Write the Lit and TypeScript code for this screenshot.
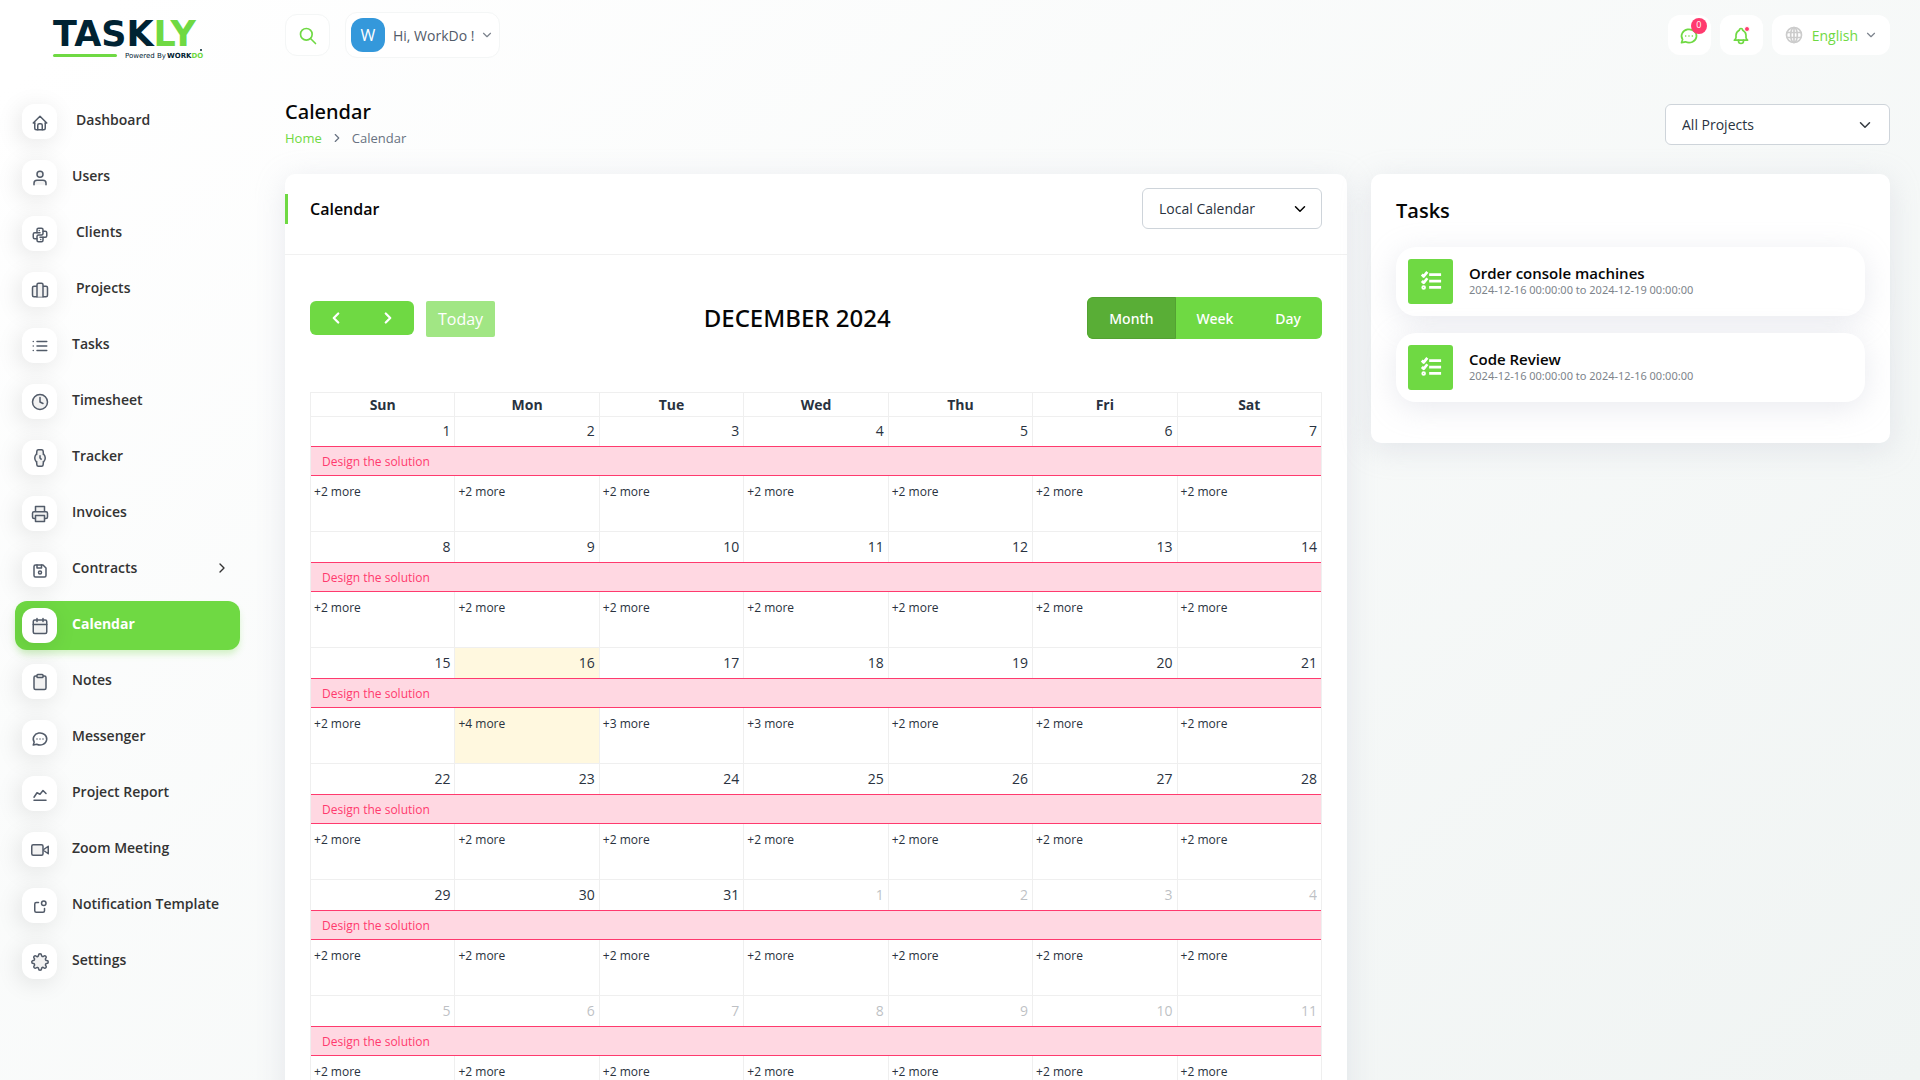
import { LitElement, html, css, svg, nothing } from "lit";
import { customElement } from "lit/decorators.js";
import { classMap } from "lit/directives/class-map.js";

const icons = {
  home: svg`<path d="M5 12H3l9-9 9 9h-2"/><path d="M5 12v7a2 2 0 0 0 2 2h10a2 2 0 0 0 2-2v-7"/><path d="M9 21v-6a2 2 0 0 1 2-2h2a2 2 0 0 1 2 2v6"/>`,
  user: svg`<path d="M20 21v-2a4 4 0 0 0-4-4H8a4 4 0 0 0-4 4v2"/><circle cx="12" cy="7" r="4"/>`,
  python: svg`<path d="M12 9H5a2 2 0 0 0-2 2v4a2 2 0 0 0 2 2h3"/><path d="M12 15h7a2 2 0 0 0 2-2V9a2 2 0 0 0-2-2h-3"/><path d="M8 9V5a2 2 0 0 1 2-2h4a2 2 0 0 1 2 2v5a2 2 0 0 1-2 2h-4a2 2 0 0 0-2 2v5a2 2 0 0 0 2 2h4a2 2 0 0 0 2-2v-4"/><path d="M11 6v.01M13 18v.01"/>`,
  briefcase: svg`<rect x="2" y="7" width="20" height="14" rx="2"/><path d="M16 21V5a2 2 0 0 0-2-2h-4a2 2 0 0 0-2 2v16"/>`,
  list: svg`<path d="M8 6h13M8 12h13M8 18h13M3 6h.01M3 12h.01M3 18h.01"/>`,
  clock: svg`<circle cx="12" cy="12" r="10"/><path d="M12 6v6l4 2"/>`,
  watch: svg`<circle cx="12" cy="12" r="7"/><path d="M12 9v3l1.5 1.5"/><path d="M16.51 17.35l-.35 3.83a2 2 0 0 1-2 1.82H9.83a2 2 0 0 1-2-1.82l-.35-3.83m.01-10.7l.35-3.83A2 2 0 0 1 9.83 1h4.35a2 2 0 0 1 2 1.82l.35 3.83"/>`,
  printer: svg`<path d="M6 9V2h12v7"/><path d="M6 18H4a2 2 0 0 1-2-2v-5a2 2 0 0 1 2-2h16a2 2 0 0 1 2 2v5a2 2 0 0 1-2 2h-2"/><rect x="6" y="14" width="12" height="8"/>`,
  floppy: svg`<path d="M6 4h10l4 4v10a2 2 0 0 1-2 2H6a2 2 0 0 1-2-2V6a2 2 0 0 1 2-2"/><circle cx="12" cy="14" r="2"/><path d="M14 4v4H8V4"/>`,
  calendar: svg`<rect x="3" y="4" width="18" height="18" rx="2"/><path d="M16 2v4M8 2v4M3 10h18"/>`,
  clipboard: svg`<path d="M16 4h2a2 2 0 0 1 2 2v14a2 2 0 0 1-2 2H6a2 2 0 0 1-2-2V6a2 2 0 0 1 2-2h2"/><rect x="8" y="2" width="8" height="4" rx="1"/>`,
  message: svg`<path d="M3 20l1.3-3.9a9 8 0 1 1 3.4 2.9L3 20"/><path d="M12 12v.01M8 12v.01M16 12v.01"/>`,
  chart: svg`<path d="M4 19h16"/><path d="M4 15l4-6 4 2 4-5 4 4"/>`,
  video: svg`<path d="M23 7l-7 5 7 5V7z"/><rect x="1" y="5" width="15" height="14" rx="2"/>`,
  notification: svg`<path d="M10 6H7a2 2 0 0 0-2 2v9a2 2 0 0 0 2 2h9a2 2 0 0 0 2-2v-3"/><circle cx="17" cy="7" r="3"/>`,
  settings: svg`<path d="M19.4 15a1.65 1.65 0 0 0 .33 1.82l.06.06a2 2 0 0 1 0 2.83 2 2 0 0 1-2.83 0l-.06-.06a1.65 1.65 0 0 0-1.82-.33 1.65 1.65 0 0 0-1 1.51V21a2 2 0 0 1-2 2 2 2 0 0 1-2-2v-.09A1.65 1.65 0 0 0 9 19.4a1.65 1.65 0 0 0-1.82.33l-.06.06a2 2 0 0 1-2.83 0 2 2 0 0 1 0-2.83l.06-.06a1.65 1.65 0 0 0 .33-1.82 1.65 1.65 0 0 0-1.51-1H3a2 2 0 0 1-2-2 2 2 0 0 1 2-2h.09A1.65 1.65 0 0 0 4.6 9a1.65 1.65 0 0 0-.33-1.82l-.06-.06a2 2 0 0 1 0-2.83 2 2 0 0 1 2.83 0l.06.06a1.65 1.65 0 0 0 1.82.33H9a1.65 1.65 0 0 0 1-1.51V3a2 2 0 0 1 2-2 2 2 0 0 1 2 2v.09a1.65 1.65 0 0 0 1 1.51 1.65 1.65 0 0 0 1.82-.33l.06-.06a2 2 0 0 1 2.83 0 2 2 0 0 1 0 2.83l-.06.06a1.65 1.65 0 0 0-.33 1.82V9a1.65 1.65 0 0 0 1.51 1H21a2 2 0 0 1 2 2 2 2 0 0 1-2 2h-.09a1.65 1.65 0 0 0-1.51 1z"/>`,
  search: svg`<circle cx="10" cy="10" r="7"/><path d="M21 21l-6-6"/>`,
  bell: svg`<path d="M10 5a2 2 0 0 1 4 0a7 7 0 0 1 4 6v3a4 4 0 0 0 2 3H4a4 4 0 0 0 2-3v-3a7 7 0 0 1 4-6"/><path d="M9 17v1a3 3 0 0 0 6 0v-1"/>`,
  globe: svg`<circle cx="12" cy="12" r="9"/><path d="M4 9h16M4 15h16M12 3v18"/><ellipse cx="12" cy="12" rx="4" ry="9"/>`,
  down: svg`<path d="M6 9l6 6 6-6"/>`,
  right: svg`<path d="M9 6l6 6-6 6"/>`,
  left: svg`<path d="M15 6l-6 6 6 6"/>`,
  tasks: svg`<path d="M10 5h13M10 12h13M10 19h13"/><path d="M2 5l2 2 4-5M2 12l2 2 4-5"/><circle cx="4" cy="19" r="1"/>`,
};

type IconName = keyof typeof icons;

const icon = (name: IconName, cls = "") =>
  html`<svg class="icon ${cls}" viewBox="0 0 24 24" aria-hidden="true">${icons[name]}</svg>`;

interface NavItem {
  label: string;
  icon: IconName;
  kind: "filled" | "line";
  indent?: boolean;
  active?: boolean;
  submenu?: boolean;
}

const nav: NavItem[] = [
  { label: "Dashboard", icon: "home", kind: "line", indent: true },
  { label: "Users", icon: "user", kind: "filled" },
  { label: "Clients", icon: "python", kind: "line", indent: true },
  { label: "Projects", icon: "briefcase", kind: "filled", indent: true },
  { label: "Tasks", icon: "list", kind: "filled" },
  { label: "Timesheet", icon: "clock", kind: "filled" },
  { label: "Tracker", icon: "watch", kind: "filled" },
  { label: "Invoices", icon: "printer", kind: "filled" },
  { label: "Contracts", icon: "floppy", kind: "line", submenu: true },
  { label: "Calendar", icon: "calendar", kind: "filled", active: true },
  { label: "Notes", icon: "clipboard", kind: "filled" },
  { label: "Messenger", icon: "message", kind: "line" },
  { label: "Project Report", icon: "chart", kind: "line" },
  { label: "Zoom Meeting", icon: "video", kind: "filled" },
  { label: "Notification Template", icon: "notification", kind: "line" },
  { label: "Settings", icon: "settings", kind: "filled" },
];

const weekdays = ["Sun", "Mon", "Tue", "Wed", "Thu", "Fri", "Sat"];

interface Day {
  date: number;
  other: boolean;
  today: boolean;
  more: number;
}

const extraEvents: Record<number, number> = { 16: 4, 17: 3, 18: 3 };

const weeks: Day[][] = Array.from({ length: 6 }, (_, w) =>
  Array.from({ length: 7 }, (_, d) => {
    const n = w * 7 + d + 1;
    return {
      date: n > 31 ? n - 31 : n,
      other: n > 31,
      today: n === 16,
      more: extraEvents[n] ?? 2,
    };
  }),
);

const tasks = [
  { title: "Order console machines", from: "2024-12-16 00:00:00", to: "2024-12-19 00:00:00" },
  { title: "Code Review", from: "2024-12-16 00:00:00", to: "2024-12-16 00:00:00" },
];

const shared = css`
  *,
  *::before,
  *::after {
    box-sizing: border-box;
  }
  .icon {
    width: 18px;
    height: 18px;
    flex: none;
    fill: none;
    stroke: currentColor;
    stroke-width: 2;
    stroke-linecap: round;
    stroke-linejoin: round;
  }
  button,
  select {
    font: inherit;
    color: inherit;
    cursor: pointer;
  }
  a {
    color: inherit;
    text-decoration: none;
  }
  h1,
  h2,
  h3,
  p,
  ul,
  ol {
    margin: 0;
    padding: 0;
  }
  ul,
  ol {
    list-style: none;
  }
  .card {
    background: #fff;
    border-radius: 10px;
    box-shadow: 0 6px 30px rgba(182, 186, 203, 0.3);
  }
  .select {
    position: relative;
    display: flex;
    align-items: center;
  }
  .select select {
    appearance: none;
    width: 100%;
    height: 41px;
    padding: 0 40px 0 16px;
    border: 1px solid #ced4da;
    border-radius: 6px;
    background: #fff;
    color: #293240;
    font-size: 14px;
  }
  .select .icon {
    position: absolute;
    right: 16px;
    color: #343a40;
    pointer-events: none;
  }
`;

@customElement("app-sidebar")
export class AppSidebar extends LitElement {
  static styles = [
    shared,
    css`
      :host {
        display: block;
      }
      .logo {
        display: block;
        padding: 14px 0 0 52px;
      }
      .logo svg {
        display: block;
        width: 156px;
        height: 46px;
      }
      .word {
        font: bold 35px "DejaVu Sans", sans-serif;
        fill: #002333;
      }
      .byline {
        font: 7px "DejaVu Sans", sans-serif;
        fill: #002333;
      }
      .strong {
        font-weight: bold;
      }
      .leaf {
        fill: #6fd943;
      }
      .nav {
        display: flex;
        flex-direction: column;
        gap: 7px;
        padding: 37px 15px 0;
      }
      .link {
        display: flex;
        align-items: center;
        height: 49px;
        padding: 0 7px;
        border-radius: 12px;
        color: #333;
        font-size: 14px;
        font-weight: 600;
        line-height: 20px;
      }
      .box {
        display: flex;
        align-items: center;
        justify-content: center;
        width: 35px;
        height: 35px;
        margin-right: 15px;
        border-radius: 12px;
        background: #fff;
        color: #525b69;
        box-shadow: -3px 4px 23px rgba(0, 0, 0, 0.1);
      }
      .filled {
        fill: #f2f2f2;
      }
      .line {
        margin-top: 2px;
      }
      .label {
        flex: 1;
        padding-bottom: 4px;
      }
      .indent {
        padding-left: 4px;
      }
      .more {
        width: 16px;
        height: 16px;
        margin: 0 3px 4px 0;
      }
      .active {
        background: #6fd943;
        color: #fff;
        font-weight: 700;
        box-shadow: 0 5px 7px -1px rgba(111, 217, 67, 0.3);
      }
    `,
  ];

  render() {
    return html`
      <a class="logo" href="#" aria-label="Taskly">
        <svg viewBox="0 0 156 46">
          <text class="word" x="1" y="32">TASK<tspan class="leaf">LY</tspan></text>
          <rect class="leaf" x="1" y="40" width="64" height="3" rx="1.5" />
          <text class="byline" x="73" y="44">Powered By</text>
          <text class="byline strong" x="115" y="44">WORK<tspan class="leaf">DO</tspan></text>
          <circle class="byline" cx="149" cy="36" r="1" />
        </svg>
      </a>
      <nav>
        <ul class="nav">
          ${nav.map(
            (item) => html`<li>
              <a
                class=${classMap({ link: true, active: !!item.active })}
                href="#"
                aria-current=${item.active ? "page" : nothing}
              >
                <span class="box">${icon(item.icon, item.kind)}</span>
                <span class=${classMap({ label: true, indent: !!item.indent })}>${item.label}</span>
                ${item.submenu ? icon("right", "more") : nothing}
              </a>
            </li>`,
          )}
        </ul>
      </nav>
    `;
  }
}

@customElement("app-topbar")
export class AppTopbar extends LitElement {
  static styles = [
    shared,
    css`
      :host {
        display: block;
      }
      .bar {
        display: flex;
        align-items: center;
        gap: 15px;
        height: 70px;
      }
      .tool {
        position: relative;
        display: flex;
        align-items: center;
        justify-content: center;
        width: 45px;
        height: 42px;
        padding: 0;
        border: 1px solid #f4f6f6;
        border-radius: 12px;
        background: #fff;
        color: #6fd943;
        font-size: 14px;
      }
      .glyph {
        width: 20px;
        height: 20px;
        margin-top: 2px;
      }
      .user {
        width: auto;
        height: 46px;
        padding: 0 5px;
        color: #525b69;
      }
      .avatar {
        width: 34px;
        height: 34px;
        margin-right: 8px;
        border-radius: 12px;
        background: #3498db;
        color: #fff;
        font-size: 16px;
        line-height: 34px;
        text-align: center;
      }
      .caret {
        width: 14px;
        height: 14px;
        margin-left: 6px;
        color: #7c838d;
      }
      .side {
        display: flex;
        gap: 9px;
        margin-left: auto;
      }
      .side .tool {
        width: 43px;
        height: 40px;
        border: 0;
      }
      .side .lang {
        width: auto;
        padding: 0 12px;
      }
      .globe {
        width: 20px;
        height: 20px;
        margin-right: 8px;
        color: #ccc;
      }
      .badge {
        position: absolute;
        top: 3px;
        right: 4px;
        width: 16px;
        height: 16px;
        border-radius: 50%;
        background: #ff3a6e;
        color: #fff;
        font-size: 9px;
        line-height: 14px;
        text-align: center;
      }
      .dot {
        position: absolute;
        top: 11px;
        right: 13px;
        width: 6px;
        height: 6px;
        border: 1px solid #fff;
        border-radius: 50%;
        background: #ff3a6e;
      }
    `,
  ];

  render() {
    return html`
      <header class="bar">
        <button class="tool" type="button" aria-label="Search">${icon("search", "glyph")}</button>
        <button class="tool user" type="button">
          <span class="avatar">W</span>Hi, WorkDo !${icon("down", "caret")}
        </button>
        <div class="side">
          <button class="tool" type="button" aria-label="Messages">
            ${icon("message", "glyph")}<span class="badge">0</span>
          </button>
          <button class="tool" type="button" aria-label="Notifications">
            ${icon("bell", "glyph")}<span class="dot"></span>
          </button>
          <button class="tool lang" type="button">
            ${icon("globe", "globe")}English${icon("down", "caret")}
          </button>
        </div>
      </header>
    `;
  }
}

@customElement("month-calendar")
export class MonthCalendar extends LitElement {
  static styles = [
    shared,
    css`
      :host {
        display: block;
      }
      .head {
        display: flex;
        align-items: flex-start;
        justify-content: space-between;
        padding: 14px 25px 25px 0;
        border-bottom: 1px solid #f1f1f1;
      }
      .title {
        margin-top: 6px;
        padding-left: 22px;
        border-left: 3px solid #6fd943;
        border-radius: 0 2px 2px 0;
        color: #060606;
        font-size: 16px;
        font-weight: 600;
        line-height: 30px;
      }
      .select {
        width: 180px;
      }
      .select .icon {
        right: 13px;
        color: #000;
      }
      .body {
        padding: 42px 25px 25px;
      }
      .toolbar {
        display: flex;
        align-items: center;
        justify-content: space-between;
        margin-bottom: 53px;
      }
      .pager {
        display: flex;
        align-items: flex-start;
        gap: 12px;
        margin-right: 12px;
        padding-top: 2px;
      }
      .group {
        display: flex;
        overflow: hidden;
        border-radius: 6px;
        background: #6fd943;
        color: #fff;
      }
      .group button {
        display: flex;
        align-items: center;
        justify-content: center;
        border: 0;
        background: none;
      }
      .arrow {
        width: 52px;
        height: 34px;
      }
      .arrow .icon {
        stroke-width: 3;
      }
      .today {
        height: 36px;
        padding: 0 12px;
        border: 0;
        border-radius: 2px;
        background: #6fd943;
        color: #fff;
        font-size: 16px;
        opacity: 0.65;
      }
      .month {
        color: #060606;
        font-family: "Noto Sans", sans-serif;
        font-size: 24px;
        font-weight: 500;
        line-height: 36px;
      }
      .view {
        height: 42px;
        padding: 0 21px;
        font-family: "Noto Sans", sans-serif;
        font-size: 14px;
        font-weight: 500;
      }
      .group .on {
        background: #59ae36;
        border: 1px solid #53a232;
        border-radius: 6px 0 0 6px;
      }
      .grid {
        width: 100%;
        table-layout: fixed;
        border-collapse: collapse;
        color: #293240;
        font-size: 14px;
      }
      .grid th,
      .grid td {
        padding: 0;
        border: solid #efefef;
        border-width: 0 1px;
      }
      .grid th {
        height: 24px;
        border-top-width: 1px;
        font-weight: 700;
        line-height: 22px;
      }
      .grid .num {
        height: 30px;
        padding: 0 4px;
        border-top-width: 1px;
        line-height: 20px;
        text-align: right;
      }
      .grid tbody:first-of-type .num {
        height: 29px;
      }
      .other {
        opacity: 0.3;
      }
      .event {
        display: block;
        height: 30px;
        padding: 0 11px;
        border: solid #ff3a6e;
        border-width: 1px 0;
        background: #ffd8e2;
        color: #ff3a6e;
        font-size: 12px;
        line-height: 30px;
      }
      .grid .rest {
        height: 56px;
        padding: 6px 3px 0;
        vertical-align: top;
        font-size: 12px;
        line-height: 20px;
      }
      .now {
        background: #fff8df;
      }
    `,
  ];

  render() {
    return html`
      <section class="card">
        <div class="head">
          <h2 class="title">Calendar</h2>
          <div class="select">
            <select aria-label="Calendar type">
              <option>Local Calendar</option>
            </select>
            ${icon("down")}
          </div>
        </div>
        <div class="body">
          <div class="toolbar">
            <div class="pager">
              <div class="group">
                <button class="arrow" type="button" aria-label="Previous month">${icon("left")}</button>
                <button class="arrow" type="button" aria-label="Next month">${icon("right")}</button>
              </div>
              <button class="today" type="button" disabled>Today</button>
            </div>
            <h2 class="month">DECEMBER 2024</h2>
            <div class="group">
              <button class="view on" type="button" aria-pressed="true">Month</button>
              <button class="view" type="button">Week</button>
              <button class="view" type="button">Day</button>
            </div>
          </div>
          <table class="grid">
            <thead>
              <tr>
                ${weekdays.map((d) => html`<th scope="col">${d}</th>`)}
              </tr>
            </thead>
            ${weeks.map(
              (week) => html`<tbody>
                <tr>
                  ${week.map(
                    (d) => html`<td class=${classMap({ num: true, now: d.today })}>
                      <span class=${classMap({ other: d.other })}>${d.date}</span>
                    </td>`,
                  )}
                </tr>
                <tr>
                  <td colspan="7"><a class="event" href="#">Design the solution</a></td>
                </tr>
                <tr>
                  ${week.map(
                    (d) => html`<td class=${classMap({ rest: true, now: d.today })}>
                      <a href="#">+${d.more} more</a>
                    </td>`,
                  )}
                </tr>
              </tbody>`,
            )}
          </table>
        </div>
      </section>
    `;
  }
}

@customElement("task-list")
export class TaskList extends LitElement {
  static styles = [
    shared,
    css`
      :host {
        display: block;
      }
      .card {
        padding: 25px 25px 41px;
      }
      .title {
        margin-bottom: 24px;
        color: #060606;
        font-size: 20px;
        font-weight: 600;
        line-height: 24px;
      }
      .list {
        display: flex;
        flex-direction: column;
        gap: 17px;
      }
      .item {
        display: flex;
        align-items: center;
        gap: 16px;
        padding: 12px;
        border-radius: 20px;
        background: #fff;
        box-shadow: 0 6px 30px rgba(182, 186, 203, 0.3);
      }
      .mark {
        display: flex;
        align-items: center;
        justify-content: center;
        width: 45px;
        height: 45px;
        border-radius: 3px;
        background: #6fd943;
        color: #fff;
      }
      .mark .icon {
        width: 22px;
        height: 22px;
        stroke-width: 3;
        stroke-linecap: butt;
        margin-bottom: 2px;
      }
      .name {
        color: #060606;
        font-size: 15px;
        font-weight: 600;
        line-height: 18px;
      }
      .when {
        padding-bottom: 2px;
        color: #7d848b;
        font-family: "Noto Sans", sans-serif;
        font-size: 11px;
        line-height: 16px;
      }
    `,
  ];

  render() {
    return html`
      <section class="card">
        <h2 class="title">Tasks</h2>
        <ul class="list">
          ${tasks.map(
            (t) => html`<li class="item">
              <span class="mark">${icon("tasks")}</span>
              <div>
                <h3 class="name">${t.title}</h3>
                <p class="when">${t.from} to ${t.to}</p>
              </div>
            </li>`,
          )}
        </ul>
      </section>
    `;
  }
}

@customElement("app-root")
export class AppRoot extends LitElement {
  static styles = [
    shared,
    css`
      :host {
        display: block;
        height: 100vh;
        overflow: hidden;
        background: linear-gradient(141.55deg, rgba(240, 244, 243, 0) 3.46%, #f0f4f3 99.86%) #fff;
        font-family: "Open Sans", "Noto Sans", sans-serif;
        font-size: 14px;
      }
      .shell {
        display: grid;
        grid-template-columns: 255px minmax(0, 1fr);
        height: 100%;
      }
      .main {
        padding: 0 30px 30px;
        overflow-y: auto;
        scrollbar-width: none;
      }
      .top {
        display: flex;
        align-items: flex-end;
        justify-content: space-between;
        padding: 29px 0;
      }
      .title {
        color: #060606;
        font-family: "Noto Sans", sans-serif;
        font-size: 20px;
        font-weight: 500;
        line-height: 26px;
      }
      .crumbs {
        display: flex;
        align-items: center;
        gap: 8px;
        margin-top: 6px;
        color: #687281;
        font-size: 13px;
        line-height: 14px;
      }
      .crumbs .icon {
        width: 14px;
        height: 14px;
      }
      .home {
        color: #6fd943;
      }
      .select {
        width: 225px;
      }
      .columns {
        display: grid;
        grid-template-columns: repeat(12, minmax(0, 1fr));
        align-items: start;
        gap: 24px;
      }
      .wide {
        grid-column: span 8;
      }
      .narrow {
        grid-column: span 4;
      }
    `,
  ];

  render() {
    return html`
      <div class="shell">
        <app-sidebar></app-sidebar>
        <main class="main">
          <app-topbar></app-topbar>
          <div class="top">
            <div>
              <h1 class="title">Calendar</h1>
              <nav class="crumbs" aria-label="Breadcrumb">
                <a class="home" href="#">Home</a>${icon("right")}<span>Calendar</span>
              </nav>
            </div>
            <div class="select">
              <select aria-label="Project">
                <option>All Projects</option>
              </select>
              ${icon("down")}
            </div>
          </div>
          <div class="columns">
            <month-calendar class="wide"></month-calendar>
            <task-list class="narrow"></task-list>
          </div>
        </main>
      </div>
    `;
  }
}
